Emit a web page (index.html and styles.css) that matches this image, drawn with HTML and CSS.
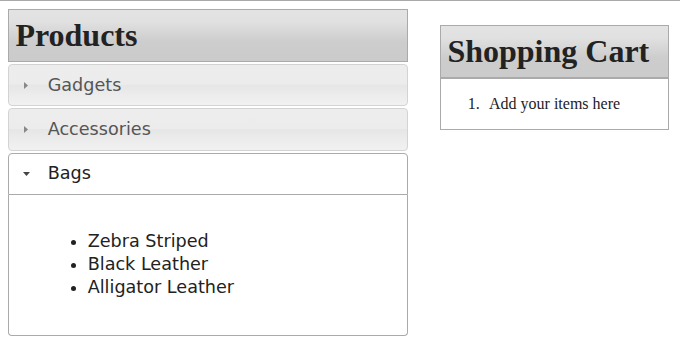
FILE: index.html
```html
<!DOCTYPE html>
<html>
<head>
<meta charset="utf-8">
<title>Shopping Cart</title>
<link rel="stylesheet" href="styles.css">
</head>
<body>
<div class="products">
  <h1 class="widget-header">Products</h1>
  <div class="accordion">
    <h3 class="acc-header">
      <svg class="acc-icon" viewBox="0 0 16 16" width="16" height="16"><path d="M6 5 L10 8.5 L6 12 Z" fill="#888888"/></svg>
      Gadgets
    </h3>
    <h3 class="acc-header">
      <svg class="acc-icon" viewBox="0 0 16 16" width="16" height="16"><path d="M6 5 L10 8.5 L6 12 Z" fill="#888888"/></svg>
      Accessories
    </h3>
    <h3 class="acc-header acc-active">
      <svg class="acc-icon" viewBox="0 0 16 16" width="16" height="16"><path d="M5 6 L12 6 L8.5 10 Z" fill="#454545"/></svg>
      Bags
    </h3>
    <div class="acc-content">
      <ul class="bag-list">
        <li>Zebra Striped</li>
        <li>Black Leather</li>
        <li>Alligator Leather</li>
      </ul>
    </div>
  </div>
</div>
<div class="cart">
  <h1 class="widget-header">Shopping Cart</h1>
  <div class="cart-content">
    <ol class="cart-list">
      <li>Add your items here</li>
    </ol>
  </div>
</div>
</body>
</html>
```

FILE: styles.css
```css
html {
  border-top: 1px solid #a9a9a9;
}
body {
  margin: 8px;
  font-family: "Liberation Serif", serif;
  display: flex;
  align-items: flex-start;
}
.products {
  width: 400px;
  margin-right: 32px;
}
.cart {
  width: 229px;
  margin-top: 16px;
}
.widget-header {
  margin: 0;
  padding: 6.9px 6.4px;
  font-size: 32px;
  font-weight: bold;
  line-height: normal;
  color: #222222;
  border: 1px solid #aaaaaa;
  background: linear-gradient(to bottom, #e3e3e3 0%, #e1e1e1 22%, #cdcdcd 62%, #cbcbcb 100%);
}
.accordion {
  font-family: "DejaVu Sans", Verdana, sans-serif;
  font-size: 17.6px;
  line-height: 1.3;
}
.acc-header {
  position: relative;
  margin: 2px 0 0 0;
  padding: 8.8px 8.8px 8.8px 38.7px;
  font-size: 100%;
  font-weight: normal;
  color: #555555;
  border: 1px solid #d3d3d3;
  border-radius: 4px;
  background: linear-gradient(to bottom, #ededed 0%, #ececec 48%, #e6e6e6 50%, #ececec 75%, #f1f1f1 100%);
}
.acc-active {
  color: #212121;
  background: #ffffff;
  border-color: #aaaaaa;
  border-radius: 4px 4px 0 0;
}
.acc-icon {
  position: absolute;
  left: 8.8px;
  top: 50%;
  margin-top: -8px;
}
.acc-content {
  padding: 17.6px 38.7px;
  color: #222222;
  border: 1px solid #aaaaaa;
  border-top: 0;
  border-radius: 0 0 4px 4px;
  background: #ffffff;
}
.bag-list {
  margin: 17.6px 0 18.6px 0;
  padding-left: 40px;
}
.cart-content {
  border: 1px solid #aaaaaa;
  color: #222222;
  background: #ffffff;
}
.cart-list {
  margin: 0;
  padding: 16px 0 16px 48px;
  font-size: 16px;
}
.cart-list li::marker {
  content: counter(list-item) ".\00a0\00a0\200a";
}
```
